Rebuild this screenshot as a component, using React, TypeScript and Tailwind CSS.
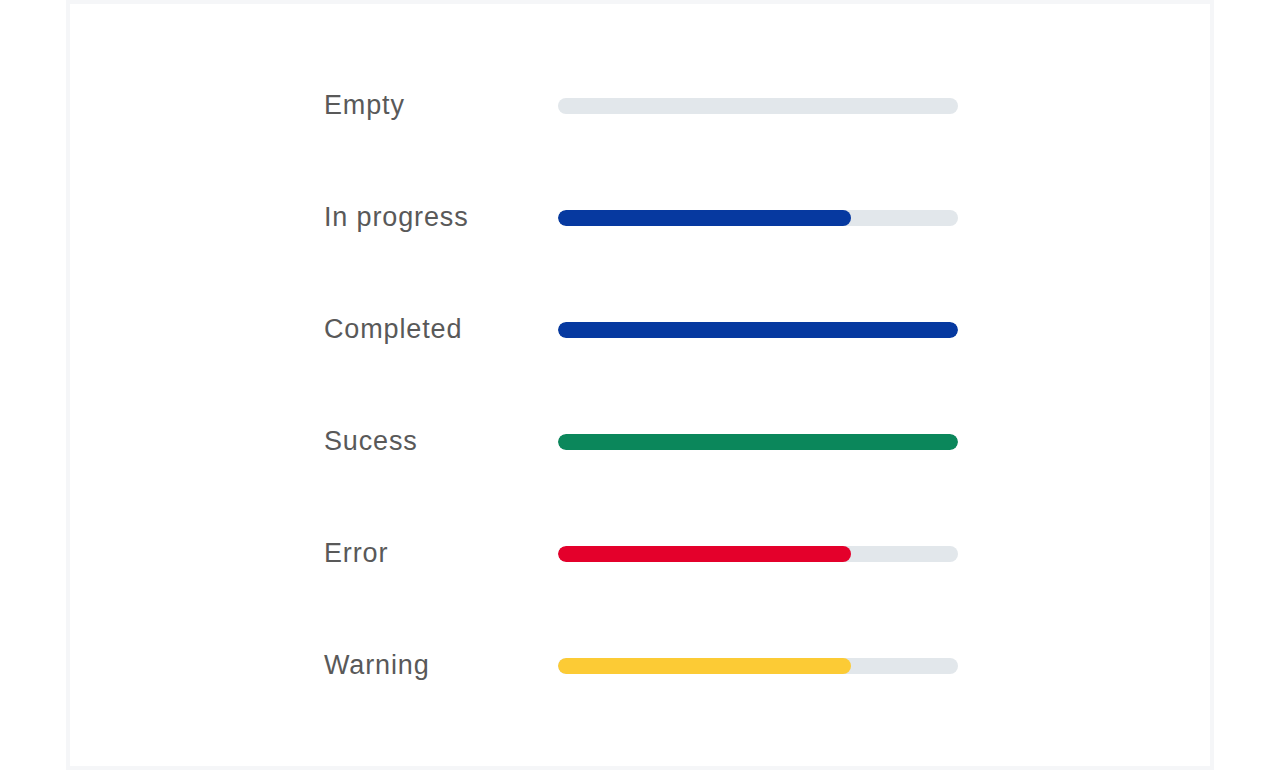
const rows = [
  { label: "Empty", value: 0, color: "bg-[#0639a0]" },
  { label: "In progress", value: 73.25, color: "bg-[#0639a0]" },
  { label: "Completed", value: 100, color: "bg-[#0639a0]" },
  { label: "Sucess", value: 100, color: "bg-[#0b875b]" },
  { label: "Error", value: 73.25, color: "bg-[#e4002b]" },
  { label: "Warning", value: 73.25, color: "bg-[#fccb35]" },
];

function ProgressRow({ label, value, color }: (typeof rows)[number]) {
  return (
    <div className="flex h-[112px] items-center">
      <p className="-mt-[1px] w-[234px] text-[27px] leading-none tracking-[0.032em] text-[#595959]">{label}</p>
      <div className="h-4 w-[400px] overflow-hidden rounded-full bg-[#e2e7eb]">
        <div className={`h-full rounded-full ${color}`} style={{ width: `${value}%` }} />
      </div>
    </div>
  );
}

export default function App() {
  return (
    <div className="flex h-[770px] w-full justify-center bg-white font-['Liberation_Sans',Arial,sans-serif]">
      <div className="flex h-full w-[1148px] flex-col border-4 border-[#f5f6f8] pl-[254px] pt-[46px]">
        <div className="flex w-[634px] flex-col">
          {rows.map((row) => (
            <ProgressRow key={row.label} {...row} />
          ))}
        </div>
      </div>
    </div>
  );
}
